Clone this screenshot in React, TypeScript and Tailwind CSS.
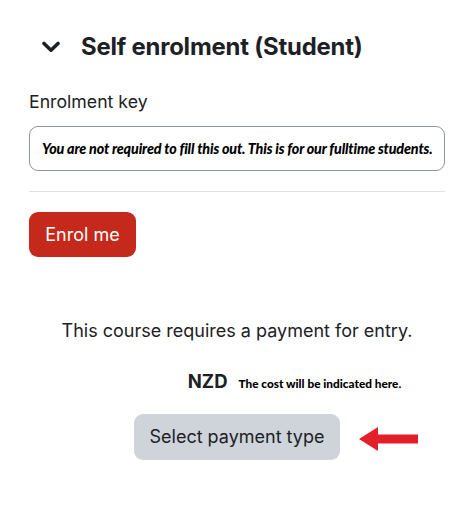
import React from "react";

function ChevronDown() {
  return (
    <svg width="18" height="12" viewBox="0 0 18 12" className="shrink-0">
      <path
        d="M2 2.5 L9 9.2 L16 2.5"
        fill="none"
        stroke="#1d2125"
        strokeWidth="3.6"
        strokeLinecap="round"
        strokeLinejoin="round"
      />
    </svg>
  );
}

function RedArrow() {
  return (
    <svg width="59" height="24" viewBox="0 0 59 24">
      <polygon points="0,12 19,0 19,7.5 59,7.5 59,16.5 19,16.5 19,24" fill="#e3202a" />
    </svg>
  );
}

function App() {
  return (
    <div className="w-[474px] h-[519px] bg-white text-[#1d2125] font-['Inter',sans-serif] overflow-hidden">
      <div className="px-[29px] pt-[30px]">
        <div className="flex items-center pl-[13px] gap-[21px] h-[34px]">
          <ChevronDown />
          <h3 className="text-[23.9px] font-bold tracking-[-0.2px]">Self enrolment (Student)</h3>
        </div>

        <div className="mt-[26px] text-[17.7px] leading-[24px]">Enrolment key</div>

        <div className="mt-[12px] h-[45px] rounded-[9px] border border-[#8f959e] flex items-center pl-[12px]">
          <span className="font-['Lato',sans-serif] italic font-black text-[14.3px] tracking-[-0.15px] text-black whitespace-nowrap">
            You are not required to fill this out. This is for our fulltime students.
          </span>
        </div>

        <div className="mt-[20px] border-t border-[#dee2e6]" />

        <button className="mt-[20px] h-[45px] w-[107px] rounded-[9px] bg-[#c4291c] text-white text-[18px]">
          Enrol me
        </button>

        <p className="mt-[62px] -mx-[29px] text-center text-[18px] leading-[24px]">
          This course requires a payment for entry.
        </p>

        <div className="mt-[25px] -mx-[29px] flex items-baseline justify-center gap-[11px] pl-[115px]">
          <span className="text-[18.5px] font-bold">NZD</span>
          <span className="font-['Lato',sans-serif] font-black text-[11.8px] text-black">
            The cost will be indicated here.
          </span>
        </div>

        <div className="mt-[18px] -mx-[29px] flex justify-center relative">
          <button className="h-[46px] w-[206px] rounded-[9px] bg-[#ced4da] text-[18px] text-[#1d2125]">
            Select payment type
          </button>
          <div className="absolute left-[359px] top-[13px]">
            <RedArrow />
          </div>
        </div>
      </div>
    </div>
  );
}

export default App;
